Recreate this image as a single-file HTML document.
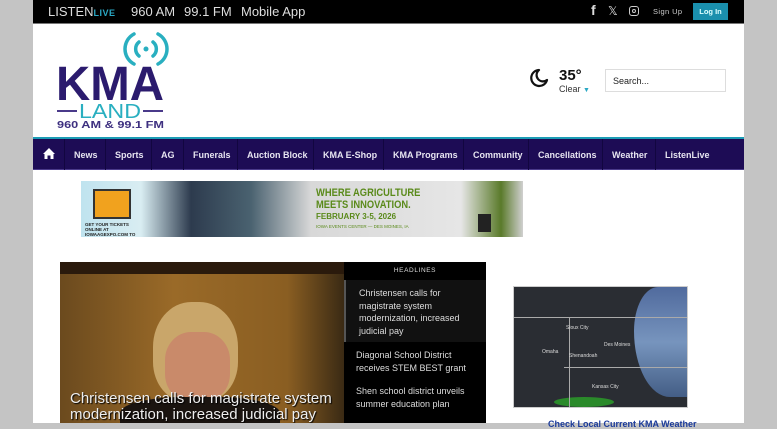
<!DOCTYPE html>
<html><head><meta charset="utf-8"><style>
*{margin:0;padding:0;box-sizing:border-box}
body{width:777px;height:423px;overflow:hidden;background:#c4c4c4;font-family:"Liberation Sans",sans-serif;position:relative}
.abs{position:absolute}
#wrap{position:absolute;left:33px;top:0;width:711px;height:423px;background:#fff}
#top{position:absolute;left:33px;top:0;width:711px;height:24px;background:#000;border-bottom:1px solid #777}
#top span{position:absolute;top:4px;color:#ddd;font-size:13px;white-space:nowrap}
#nav{position:absolute;left:33px;top:137px;width:711px;height:33px;background:#1d0c55;border-top:2px solid #1b9cb5;border-bottom:1px solid #4a3a8a}
#nav span{position:absolute;top:11px;color:#e6e4f0;font-size:9px;font-weight:bold;white-space:nowrap}
#nav i{position:absolute;top:0;width:1px;height:31px;background:#120640}
</style></head><body>
<div id="wrap"></div>
<div id="top">
<span style="left:15px">LISTEN<b style="color:#2aa8c4;font-size:9px;letter-spacing:0.5px">LIVE</b></span>
<span style="left:98px">960 AM</span>
<span style="left:151px">99.1 FM</span>
<span style="left:208px">Mobile App</span>
<span style="left:558px;top:2px;font-weight:bold;font-size:14px">f</span>
<span style="left:575px;top:4px;font-size:12px">𝕏</span>
<div class="abs" style="left:596px;top:6px;width:10px;height:10px;border:1.3px solid #ccc;border-radius:3px"><div class="abs" style="left:1.5px;top:1.5px;width:4.5px;height:4.5px;border:1.2px solid #ccc;border-radius:50%"></div></div>
<span style="left:620px;top:7px;font-size:7.5px;color:#ccc;letter-spacing:.4px">Sign Up</span>
<div class="abs" style="left:660px;top:3px;width:35px;height:17px;background:#1a8fad;color:#dff;font-size:7.5px;font-weight:bold;text-align:center;line-height:17px">Log In</div>
</div>
<!-- logo -->
<svg class="abs" style="left:55px;top:28px" width="115" height="105" viewBox="0 0 115 105">
<g fill="none" stroke="#29afc0" stroke-width="3.5" stroke-linecap="round">
<path d="M84 14 A9 9 0 0 0 84 28"/><path d="M98 14 A9 9 0 0 1 98 28"/>
<path d="M79 6 A17 17 0 0 0 79 36"/><path d="M103 6 A17 17 0 0 1 103 36"/>
</g>
<circle cx="91" cy="21" r="2.5" fill="#29afc0"/>
<text x="1" y="72" font-family="Liberation Sans" font-weight="bold" font-size="48" fill="#2b1b6e" textLength="108" lengthAdjust="spacingAndGlyphs">KMA</text>
<rect x="2" y="82" width="20" height="2" fill="#4a3a8a"/><rect x="88" y="82" width="20" height="2" fill="#4a3a8a"/>
<text x="24" y="90" font-family="Liberation Sans" font-size="20" fill="#29afc0" textLength="62" lengthAdjust="spacingAndGlyphs">LAND</text>
<text x="2" y="100" font-family="Liberation Sans" font-weight="bold" font-size="10.5" fill="#3e3080" textLength="107" lengthAdjust="spacingAndGlyphs">960 AM &amp; 99.1 FM</text>
</svg>
<!-- weather -->
<svg class="abs" style="left:530px;top:68px" width="20" height="20" viewBox="0 0 20 20"><path d="M9 2 A8 8 0 1 0 17 12 A6 6 0 0 1 9 2Z" fill="none" stroke="#111" stroke-width="2.2" stroke-linejoin="round"/></svg>
<div class="abs" style="left:559px;top:67px;font-size:15px;font-weight:bold;color:#111">35°</div>
<div class="abs" style="left:559px;top:84px;font-size:9px;color:#333">Clear <span style="color:#2aa8c4;font-size:7px">▼</span></div>
<div class="abs" style="left:605px;top:69px;width:121px;height:23px;border:1.5px solid #ddd;font-size:9px;color:#222;padding:6px 7px">Search...</div>
<!-- nav -->
<div id="nav">
<svg class="abs" style="left:10px;top:9px" width="12" height="11" viewBox="0 0 12 11"><path d="M6 0 L12 6 L10.5 6 L10.5 11 L7.5 11 L7.5 7.5 L4.5 7.5 L4.5 11 L1.5 11 L1.5 6 L0 6Z" fill="#fff"/></svg>
<i style="left:31px"></i><span style="left:41px">News</span>
<i style="left:72px"></i><span style="left:82px">Sports</span>
<i style="left:118px"></i><span style="left:128px">AG</span>
<i style="left:150px"></i><span style="left:160px">Funerals</span>
<i style="left:204px"></i><span style="left:214px">Auction Block</span>
<i style="left:280px"></i><span style="left:290px">KMA E-Shop</span>
<i style="left:350px"></i><span style="left:360px">KMA Programs</span>
<i style="left:430px"></i><span style="left:440px">Community</span>
<i style="left:495px"></i><span style="left:505px">Cancellations</span>
<i style="left:569px"></i><span style="left:579px">Weather</span>
<i style="left:622px"></i><span style="left:632px">ListenLive</span>
</div>
<!-- banner -->
<div class="abs" style="left:81px;top:181px;width:442px;height:56px;background:linear-gradient(90deg,#bfe3ef 0,#d9edf2 60px,#2d3b4e 110px,#4a6270 170px,#d8d8d8 230px,#e6e6e6 380px,#5a7a2a 420px,#d0d0d0 442px);overflow:hidden">
<div class="abs" style="left:12px;top:8px;width:38px;height:30px;background:#f1a21e;border:2px solid #333"></div>
<div class="abs" style="left:4px;top:41px;font-size:4.5px;font-weight:bold;color:#222;width:60px">GET YOUR TICKETS ONLINE AT IOWAAGEXPO.COM TO SAVE $5</div>
<div class="abs" style="left:235px;top:6px;font-size:11px;font-weight:bold;color:#5a8a1a;line-height:12px;transform:scaleX(.85);transform-origin:left">WHERE AGRICULTURE<br>MEETS INNOVATION.</div>
<div class="abs" style="left:235px;top:31px;font-size:8px;font-weight:bold;color:#5a8a1a">FEBRUARY 3-5, 2026</div>
<div class="abs" style="left:235px;top:43px;font-size:4.5px;color:#5a8a1a">IOWA EVENTS CENTER — DES MOINES, IA</div>
<div class="abs" style="left:397px;top:33px;width:13px;height:18px;background:#222"></div>
</div>
<!-- slider -->
<div class="abs" style="left:60px;top:262px;width:284px;height:161px;background:linear-gradient(90deg,#6b4a1e,#9a6a28 40%,#8a5e22 80%,#3a2a14);overflow:hidden">
<div class="abs" style="left:0;top:0;width:284px;height:12px;background:#2a1a0c"></div>
<div class="abs" style="left:93px;top:40px;width:85px;height:100px;border-radius:45% 45% 40% 40%;background:#c9a66a"></div>
<div class="abs" style="left:105px;top:70px;width:65px;height:70px;border-radius:40%;background:#c98a6a"></div>
<div class="abs" style="left:60px;top:135px;width:160px;height:40px;border-radius:40% 40% 0 0;background:#1a1410"></div>
<div class="abs" style="left:10px;top:129px;font-size:15px;color:#eee;line-height:16px;text-shadow:1px 1px 1px #000;white-space:nowrap">Christensen calls for magistrate system<br>modernization, increased judicial pay</div>
</div>
<div class="abs" style="left:344px;top:262px;width:142px;height:161px;background:#000;color:#ddd">
<div class="abs" style="left:0;top:5px;width:142px;text-align:center;font-size:6.5px;letter-spacing:.6px">HEADLINES</div>
<div class="abs" style="left:0;top:18px;width:142px;height:62px;background:#111;border-left:2px solid #555"></div>
<div class="abs" style="left:15px;top:25px;font-size:9px;line-height:12.5px;width:120px">Christensen calls for magistrate system modernization, increased judicial pay</div>
<div class="abs" style="left:12px;top:87px;font-size:9px;line-height:12.5px;width:125px">Diagonal School District receives STEM BEST grant</div>
<div class="abs" style="left:12px;top:123px;font-size:9px;line-height:12.5px;width:125px">Shen school district unveils summer education plan</div>
</div>
<!-- radar -->
<div class="abs" style="left:513px;top:286px;width:175px;height:122px;background:#2a2d33;overflow:hidden;border:1px solid #ccc">
<div class="abs" style="left:120px;top:0;width:60px;height:110px;background:linear-gradient(180deg,#5a7ab8,#8aaee0 50%,#4a6a9a);border-radius:40% 0 0 60%;opacity:.8"></div>
<div class="abs" style="left:40px;top:110px;width:60px;height:10px;background:#2a8a2a;border-radius:50%"></div>
<div class="abs" style="left:0;top:30px;width:175px;height:1px;background:#aaa"></div>
<div class="abs" style="left:50px;top:80px;width:125px;height:1px;background:#aaa"></div>
<div class="abs" style="left:55px;top:30px;width:1px;height:90px;background:#aaa"></div>
<span class="abs" style="left:52px;top:38px;font-size:5px;color:#ddd">Sioux City</span>
<span class="abs" style="left:90px;top:55px;font-size:5px;color:#ddd">Des Moines</span>
<span class="abs" style="left:28px;top:62px;font-size:5px;color:#ddd">Omaha</span>
<span class="abs" style="left:55px;top:66px;font-size:5px;color:#ddd">Shenandoah</span>
<span class="abs" style="left:78px;top:97px;font-size:5px;color:#ddd">Kansas City</span>
</div>
<div class="abs" style="left:548px;top:419px;font-size:9px;font-weight:bold;color:#1a3a9a;white-space:nowrap">Check Local Current KMA Weather</div>
</body></html>
